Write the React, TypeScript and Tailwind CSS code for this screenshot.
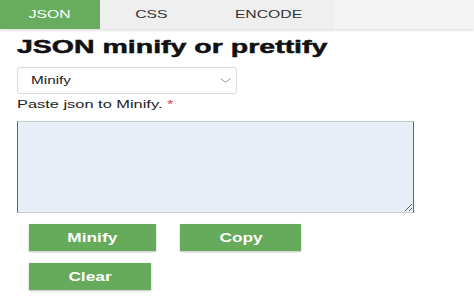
import React from "react";

const font = "font-['Liberation_Sans',Arial,sans-serif]";

// the screenshot's type runs wide, so text is stretched sideways
function Wide({
  children,
  className = "",
}: {
  children: React.ReactNode;
  className?: string;
}) {
  return <span className={`inline-block ${className}`}>{children}</span>;
}

const tabs = [
  { label: "JSON", width: "w-[100px]", active: true },
  { label: "CSS", width: "w-[103px]", active: false },
  { label: "ENCODE", width: "w-[131px]", active: false },
];

function Chevron() {
  return (
    <svg width="11" height="5" viewBox="0 0 11 5" fill="none" aria-hidden>
      <path d="M0.5 0.6 L5.5 4.2 L10.5 0.6" stroke="#8a8a8a" strokeWidth="0.9" />
    </svg>
  );
}

function GreenButton({ label, width }: { label: string; width: string }) {
  return (
    <button
      type="button"
      className={`${width} h-[27px] flex items-center justify-center bg-[#66aa5b] text-white text-[12px] font-bold leading-none shadow-[0_1px_2px_rgba(0,0,0,0.25)]`}
    >
      <Wide className="origin-center scale-x-[1.44]">{label}</Wide>
    </button>
  );
}

export default function App() {
  return (
    <div className={`w-[474px] h-[296px] bg-white overflow-hidden ${font}`}>
      <nav className="h-[29px] flex bg-[#f4f4f4] shadow-[0_1px_3px_rgba(0,0,0,0.18)] relative">
        {tabs.map((t) => (
          <div
            key={t.label}
            className={`${t.width} h-full flex items-center justify-center text-[11px] leading-none ${
              t.active ? "bg-[#67ad5d] text-white" : "bg-[#efefef] text-[#333]"
            }`}
          >
            <Wide className="origin-center scale-x-[1.43]">{t.label}</Wide>
          </div>
        ))}
      </nav>

      <main className="pl-[17px]">
        <h1 className="mt-[8px] h-[19px] text-[19px] leading-[19px] font-bold text-[#111] [-webkit-text-stroke:0.5px_#111] whitespace-nowrap">
          <Wide className="origin-left scale-x-[1.5]">JSON minify or prettify</Wide>
        </h1>

        <div className="mt-[11px] w-[220px] h-[27px] flex items-center justify-between pl-[13px] pr-[5px] bg-white border border-[#dadada] rounded-[3px] text-[11px] leading-none text-[#222]">
          <Wide className="origin-left scale-x-[1.39]">Minify</Wide>
          <Chevron />
        </div>

        <label className="block mt-[5px] h-[11px] text-[11px] leading-[11px] text-[#222] whitespace-nowrap">
          <Wide className="origin-left scale-x-[1.49]">
            Paste json to Minify. <span className="text-[#e53935]">*</span>
          </Wide>
        </label>

        <textarea
          className="block mt-[11px] w-[397px] h-[92px] bg-[#e8eef7] border border-[#c6c9cf] border-l-[#5d6478] border-r-[#5d6478] outline-none"
          aria-label="Paste json to Minify."
        />

        <div className="pl-[12px] pt-[11px] flex flex-col gap-[12px]">
          <div className="flex gap-[24px]">
            <GreenButton label="Minify" width="w-[127px]" />
            <GreenButton label="Copy" width="w-[121px]" />
          </div>
          <GreenButton label="Clear" width="w-[122px]" />
        </div>
      </main>
    </div>
  );
}
